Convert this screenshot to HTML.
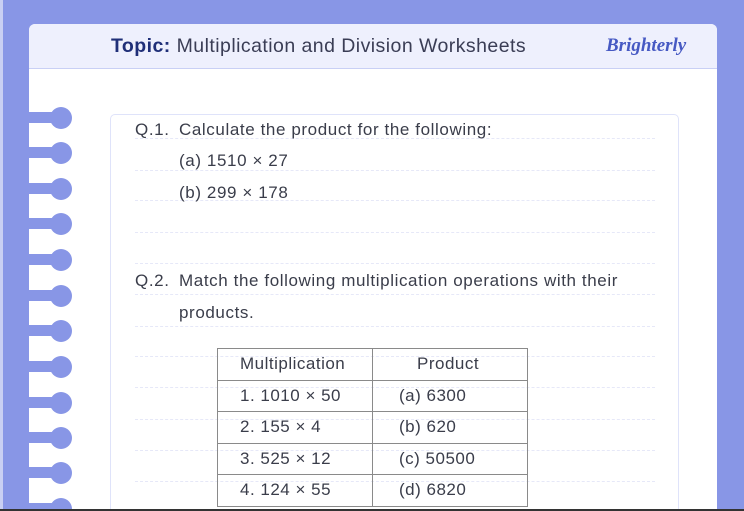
<!DOCTYPE html>
<html><head><style>
*{margin:0;padding:0;box-sizing:border-box}
html,body{width:744px;height:511px;overflow:hidden}
body{font-family:"Liberation Sans",sans-serif;color:#3a3d4a}
#w{position:relative;width:744px;height:511px;overflow:hidden;background:#8896e6}
.strip{position:absolute;left:0;top:0;width:3px;height:511px;background:#c9cff3}
.page{position:absolute;left:29px;top:24px;width:688px;height:487px;background:#fff;border-radius:6px 6px 0 0}
.hdr{position:absolute;left:29px;top:24px;width:688px;height:45px;background:#eef0fd;border-bottom:1px solid #c9d0f5;border-radius:6px 6px 0 0}
.title{position:absolute;left:111px;top:35px;font-size:19.5px;letter-spacing:0.45px;color:#3a3d55}
.title b{color:#1f2f78}
.logo{position:absolute;left:606px;top:35px;font-family:"Liberation Serif",serif;font-style:italic;font-weight:bold;font-size:19px;color:#4659c3}
.box{position:absolute;left:110px;top:114px;width:569px;height:420px;border:1px solid #dfe3fa;border-radius:5px}
.dl{position:absolute;left:135px;width:520px;border-top:1px dashed #e6e8f8}
.t{position:absolute;font-size:17px;letter-spacing:0.6px;color:#3a3d4a;white-space:nowrap}
.ring{position:absolute;width:22px;height:22px;border-radius:50%;background:#8896e6;left:50px}
.bar{position:absolute;left:29px;width:26px;height:11px;background:#8896e6}
table{position:absolute;left:217px;top:348px;border-collapse:collapse;font-size:17px;letter-spacing:0.5px}
td{border:1.5px solid #8a8a8a;height:31.5px;padding:0 0 0 22px;color:#3a3d4a;white-space:nowrap}
td:first-child{width:155px}
td:last-child{width:155px;padding-left:26px}
.bot{position:absolute;left:0;top:509px;width:744px;height:2px;background:#333}
</style></head><body><div id="w">
<div class="strip"></div>
<div class="page"></div>
<div class="hdr"></div>
<div class="title"><b>Topic:</b> Multiplication and Division Worksheets</div>
<div class="logo">Brighterly</div>
<div class="box"></div>
<div class="dl" style="top:138px"></div>
<div class="dl" style="top:170px"></div>
<div class="dl" style="top:200px"></div>
<div class="dl" style="top:232px"></div>
<div class="dl" style="top:263px"></div>
<div class="dl" style="top:294px"></div>
<div class="dl" style="top:326px"></div>
<div class="dl" style="top:356px"></div>
<div class="dl" style="top:387px"></div>
<div class="dl" style="top:419px"></div>
<div class="dl" style="top:450px"></div>
<div class="dl" style="top:481px"></div>
<div class="t" style="left:135px;top:120px">Q.1.</div>
<div class="t" style="left:179px;top:120px">Calculate the product for the following:</div>
<div class="t" style="left:179px;top:151px">(a) 1510 × 27</div>
<div class="t" style="left:179px;top:183px">(b) 299 × 178</div>
<div class="t" style="left:135px;top:271px">Q.2.</div>
<div class="t" style="left:179px;top:271px">Match the following multiplication operations with their</div>
<div class="t" style="left:179px;top:303px">products.</div>
<table>
<tr><td>Multiplication</td><td style="padding-left:44px">Product</td></tr>
<tr><td>1. 1010 × 50</td><td>(a) 6300</td></tr>
<tr><td>2. 155 × 4</td><td>(b) 620</td></tr>
<tr><td>3. 525 × 12</td><td>(c) 50500</td></tr>
<tr><td>4. 124 × 55</td><td>(d) 6820</td></tr>
</table>
<div class="bar" style="top:112px"></div><div class="ring" style="top:107px"></div>
<div class="bar" style="top:147px"></div><div class="ring" style="top:142px"></div>
<div class="bar" style="top:183px"></div><div class="ring" style="top:178px"></div>
<div class="bar" style="top:218px"></div><div class="ring" style="top:213px"></div>
<div class="bar" style="top:254px"></div><div class="ring" style="top:249px"></div>
<div class="bar" style="top:290px"></div><div class="ring" style="top:285px"></div>
<div class="bar" style="top:325px"></div><div class="ring" style="top:320px"></div>
<div class="bar" style="top:361px"></div><div class="ring" style="top:356px"></div>
<div class="bar" style="top:397px"></div><div class="ring" style="top:392px"></div>
<div class="bar" style="top:432px"></div><div class="ring" style="top:427px"></div>
<div class="bar" style="top:467px"></div><div class="ring" style="top:462px"></div>
<div class="bar" style="top:503px"></div><div class="ring" style="top:498px"></div>
<div class="bot"></div>
</div></body></html>
